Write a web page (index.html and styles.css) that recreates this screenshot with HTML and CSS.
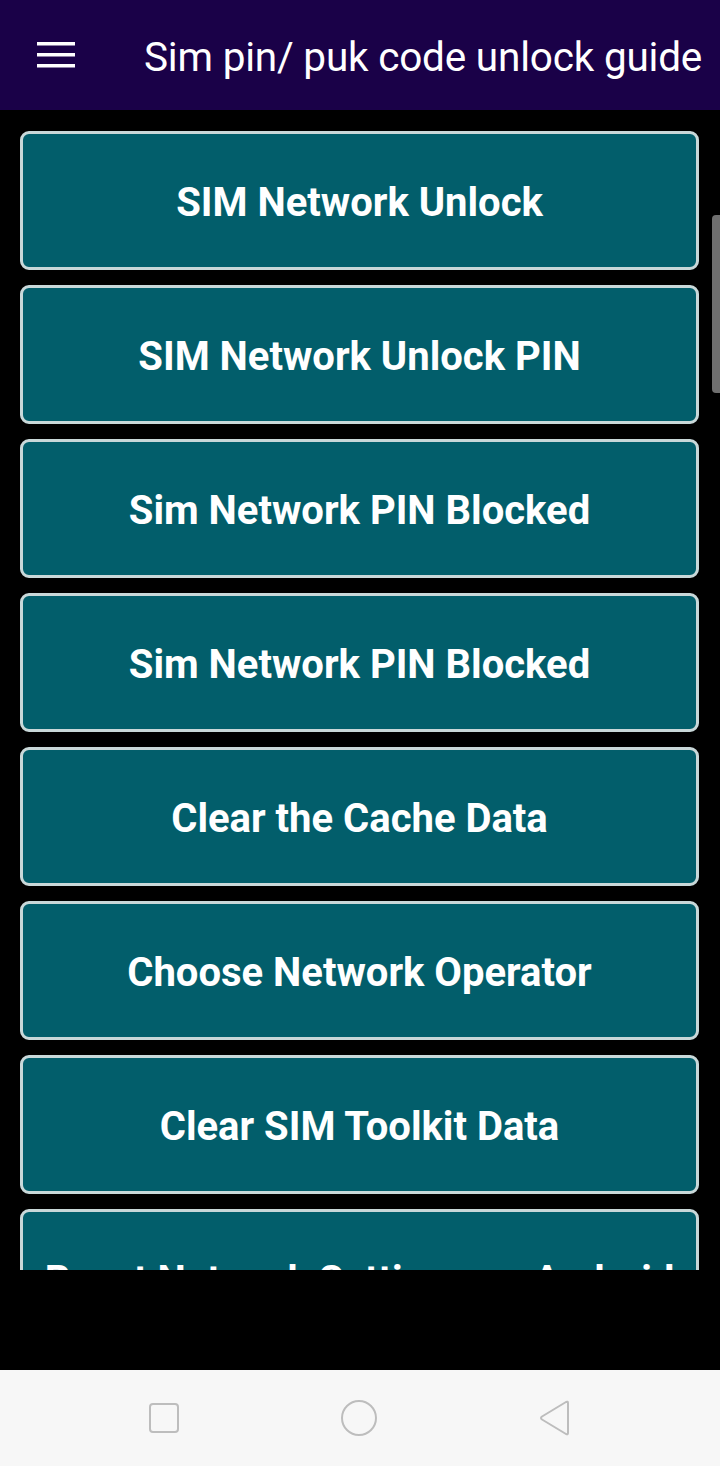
FILE: index.html
```html
<!DOCTYPE html>
<html>
<head>
<meta charset="utf-8">
<link rel="stylesheet" href="styles.css">
</head>
<body>
<div class="screen">
  <header class="appbar">
    <div class="menu">
      <svg width="40" height="28" viewBox="0 0 40 28"><rect x="0" y="1" width="38" height="3.5" fill="#fff"/><rect x="0" y="12" width="38" height="3.5" fill="#fff"/><rect x="0" y="23" width="38" height="3.5" fill="#fff"/></svg>
    </div>
    <div class="title">Sim pin/ puk code unlock guide</div>
  </header>
  <main class="content">
    <div class="list">
      <div class="btn">SIM Network Unlock</div>
      <div class="btn">SIM Network Unlock PIN</div>
      <div class="btn">Sim Network PIN Blocked</div>
      <div class="btn">Sim Network PIN Blocked</div>
      <div class="btn">Clear the Cache Data</div>
      <div class="btn">Choose Network Operator</div>
      <div class="btn">Clear SIM Toolkit Data</div>
      <div class="btn btn-long">Reset Network Settings on Android</div>
    </div>
    <div class="scrollbar"></div>
  </main>
  <div class="adspace"></div>
  <nav class="navbar">
    <svg width="32" height="32" viewBox="0 0 32 32"><rect x="2" y="2" width="28" height="28" rx="3" fill="none" stroke="#bdbdbd" stroke-width="2"/></svg>
    <svg width="38" height="38" viewBox="0 0 38 38"><ellipse cx="19" cy="19" rx="17" ry="17" fill="none" stroke="#bdbdbd" stroke-width="2"/></svg>
    <svg width="34" height="36" viewBox="0 0 34 36"><path d="M30 3 L30 33 Q30 35 28 34 L4 19.5 Q2 18 4 16.5 L28 2 Q30 1 30 3 Z" fill="none" stroke="#bdbdbd" stroke-width="2" stroke-linejoin="round"/></svg>
  </nav>
</div>
</body>
</html>
```
FILE: styles.css
```css
* { box-sizing: border-box; }
html, body { margin: 0; padding: 0; background: #000; }
.screen { width: 720px; height: 1466px; display: flex; flex-direction: column; background: #000; overflow: hidden; }
.appbar { height: 110px; background: #1a0148; display: flex; align-items: center; flex-shrink: 0; }
.menu { width: 144px; padding-left: 37px; display: flex; align-items: center; }
.menu svg { display: block; }
.title { color: #fff; font-family: Roboto, "Noto Sans", sans-serif; font-size: 40.5px; white-space: nowrap; letter-spacing: -0.2px; padding-top: 4px; }
.content { height: 1160px; position: relative; overflow: hidden; flex-shrink: 0; }
.list { padding: 21px 21px 0 20px; display: flex; flex-direction: column; gap: 15px; }
.btn { height: 139px; background: #025e6b; border: 3px solid #c9d8d9; border-radius: 9px; display: flex; align-items: center; justify-content: center; color: #fff; font-family: Roboto, "Noto Sans", sans-serif; font-weight: bold; font-size: 40px; white-space: nowrap; padding-top: 4px; }
.btn-long { padding-top: 3px; }
.scrollbar { position: absolute; right: 0; top: 105px; width: 8px; height: 178px; background: #6f6f6f; border-radius: 4px 0 0 4px; }
.adspace { height: 100px; background: #000; flex-shrink: 0; }
.navbar { height: 96px; background: #f7f7f7; display: flex; align-items: center; justify-content: space-between; padding: 0 148px 0 148px; flex-shrink: 0; }
.navbar svg { display: block; }
```
